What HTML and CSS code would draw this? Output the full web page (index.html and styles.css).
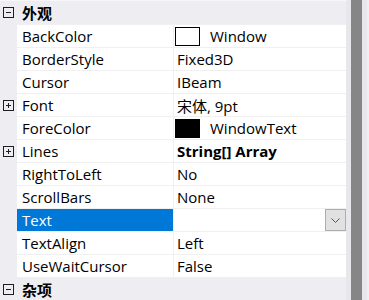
FILE: index.html
```html
<!DOCTYPE html>
<html>
<head>
<meta charset="utf-8">
<link rel="stylesheet" href="styles.css">
</head>
<body>
<div class="pg">
  <div class="panel">
    <div class="cat first">
      <span class="tog"><svg width="11" height="11" viewBox="0 0 11 11"><rect x="0.5" y="0.5" width="10" height="10" fill="none" stroke="#1e1e1e"/><path d="M3 5.5H8" stroke="#1e1e1e"/></svg></span>
      <span class="catlabel">外观</span>
    </div>
    <div class="row"><div class="mg"></div><div class="name">BackColor</div><div class="val"><span class="sw sw-white"></span><span class="swtext">Window</span></div></div>
    <div class="row"><div class="mg"></div><div class="name">BorderStyle</div><div class="val">Fixed3D</div></div>
    <div class="row"><div class="mg"></div><div class="name">Cursor</div><div class="val">IBeam</div></div>
    <div class="row"><div class="mg"><span class="tog"><svg width="11" height="11" viewBox="0 0 11 11"><rect x="0.5" y="0.5" width="10" height="10" fill="none" stroke="#1e1e1e"/><path d="M3 5.5H8M5.5 3V8" stroke="#1e1e1e"/></svg></span></div><div class="name">Font</div><div class="val">宋体, 9pt</div></div>
    <div class="row"><div class="mg"></div><div class="name">ForeColor</div><div class="val"><span class="sw sw-black"></span><span class="swtext">WindowText</span></div></div>
    <div class="row"><div class="mg"><span class="tog"><svg width="11" height="11" viewBox="0 0 11 11"><rect x="0.5" y="0.5" width="10" height="10" fill="none" stroke="#1e1e1e"/><path d="M3 5.5H8M5.5 3V8" stroke="#1e1e1e"/></svg></span></div><div class="name">Lines</div><div class="val bold">String[] Array</div></div>
    <div class="row"><div class="mg"></div><div class="name">RightToLeft</div><div class="val">No</div></div>
    <div class="row"><div class="mg"></div><div class="name">ScrollBars</div><div class="val">None</div></div>
    <div class="row"><div class="mg"></div><div class="name sel">Text</div><div class="val edit"><span class="ddbtn"><svg width="9" height="5" viewBox="0 0 9 5"><path d="M0.5 0.5L4.5 4.5L8.5 0.5" fill="none" stroke="#555" stroke-width="1"/></svg></span></div></div>
    <div class="row"><div class="mg"></div><div class="name">TextAlign</div><div class="val">Left</div></div>
    <div class="row"><div class="mg"></div><div class="name">UseWaitCursor</div><div class="val">False</div></div>
    <div class="cat">
      <span class="tog"><svg width="11" height="11" viewBox="0 0 11 11"><rect x="0.5" y="0.5" width="10" height="10" fill="none" stroke="#1e1e1e"/><path d="M3 5.5H8" stroke="#1e1e1e"/></svg></span>
      <span class="catlabel">杂项</span>
    </div>
  </div>
  <div class="sb"><div class="thumb"></div></div>
</div>
</body>
</html>
```
FILE: styles.css
```css
html, body {
  margin: 0;
  padding: 0;
  background: #eeeef2;
}
body {
  font-family: "Open Sans", "Noto Sans CJK SC", sans-serif;
  font-size: 15px;
  color: #000;
  overflow: hidden;
}
.pg {
  display: flex;
  width: 369px;
  height: 300px;
  overflow: hidden;
}
.panel {
  width: 346px;
  flex: none;
  display: flex;
  flex-direction: column;
  background: #eeeef2;
}
.cat {
  height: 24px;
  flex: none;
  display: flex;
  align-items: center;
  box-sizing: border-box;
}
.cat.first {
  border-top: 1px solid #f7f7f9;
}
.tog {
  width: 17px;
  display: flex;
  justify-content: center;
  padding-right: 1px;
  box-sizing: border-box;
}
.tog svg { display: block; }
.catlabel {
  font-family: "Noto Sans CJK SC", sans-serif;
  font-weight: bold;
  padding-left: 5px;
  line-height: 1;
}
.row {
  height: 23px;
  flex: none;
  display: flex;
}
.mg {
  width: 17px;
  flex: none;
  display: flex;
  align-items: center;
  padding-top: 2px;
  box-sizing: border-box;
}
.mg .tog { width: 17px; }
.name {
  width: 157px;
  flex: none;
  box-sizing: border-box;
  border-top: 1px solid #f0f0f0;
  border-right: 1px solid #f0f0f0;
  background: #fff;
  padding-left: 5px;
  display: flex;
  align-items: center;
  white-space: nowrap;
}
.name.sel {
  background: #0078d7;
  color: #fff;
}
.val {
  flex: 1;
  box-sizing: border-box;
  border-top: 1px solid #f0f0f0;
  background: #fff;
  padding-left: 3px;
  display: flex;
  align-items: center;
  white-space: nowrap;
}
.val.bold { font-weight: bold; }
.val.edit {
  justify-content: flex-end;
  padding-left: 0;
}
.sw {
  width: 25px;
  height: 19px;
  box-sizing: border-box;
  margin-left: -2px;
  flex: none;
}
.sw-white { border: 1px solid #000; background: #fff; }
.sw-black { background: #000; }
.swtext { padding-left: 10px; }
.ddbtn {
  width: 21px;
  height: 22px;
  box-sizing: border-box;
  border: 1px solid #adadad;
  background: #e1e1e1;
  display: flex;
  align-items: center;
  justify-content: center;
}
.ddbtn svg { display: block; }
.sb {
  width: 23px;
  flex: none;
  background: #e8e8ec;
  padding-left: 5px;
  box-sizing: border-box;
  border-right: 2px solid #f0f0f3;
}
.thumb {
  width: 11px;
  height: 100%;
  background: #868686;
}
```
